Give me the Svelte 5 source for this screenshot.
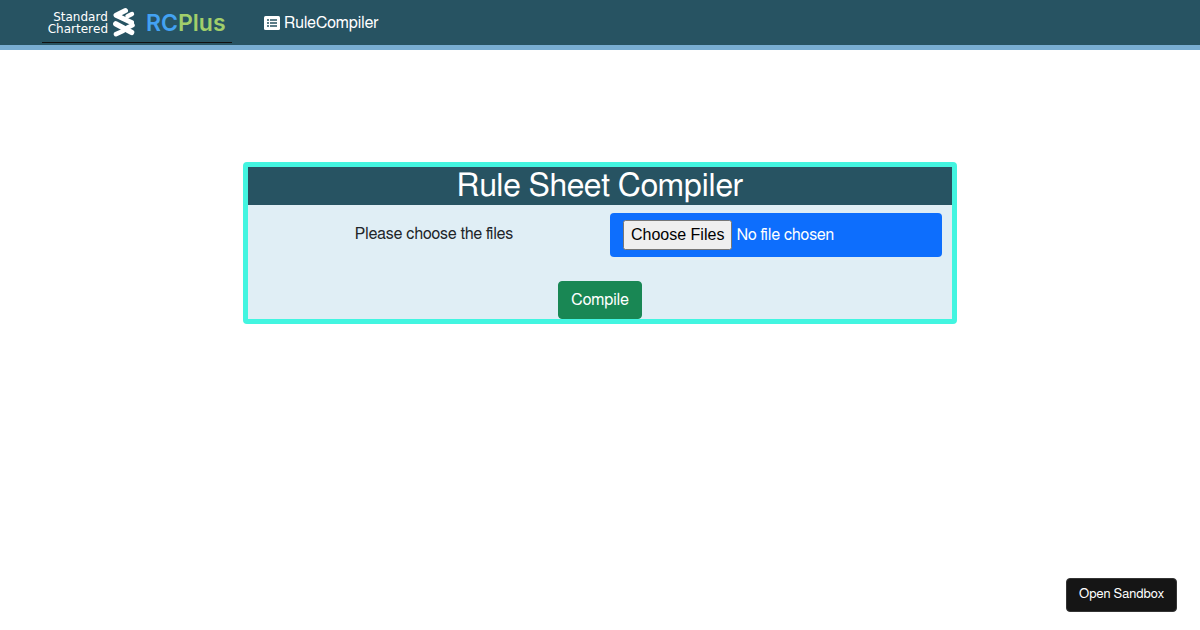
<script lang="ts">
	let files = $state<FileList | undefined>();

	function compile(event: SubmitEvent) {
		event.preventDefault();
	}
</script>

<svelte:head>
	<title>Rule Sheet Compiler</title>
</svelte:head>

<div class="page">
	<header class="navbar">
		<a class="brand" href="/" aria-label="Standard Chartered RCPlus">
			<span class="bank-name">
				<span>Standard</span>
				<span>Chartered</span>
			</span>
			<svg class="bank-mark" width="24" height="30" viewBox="0 0 24 30" fill="none" stroke="#fff" stroke-linecap="round" stroke-linejoin="round">
				<path d="M13.5 3.5L4 8.2L19.5 15.6" stroke-width="5" />
				<path d="M20 7L15.5 9.2" stroke-width="4.4" />
				<path d="M3.8 16.8L19.6 25.4" stroke-width="5.4" />
				<path d="M20.5 18.2L15.5 20.6M11 24L4 27.2" stroke-width="4.6" />
			</svg>
			<span class="product"><span class="rc">RC</span><span class="plus">Plus</span></span>
		</a>
		<nav>
			<a class="nav-link" href="/rule-compiler">
				<svg width="16" height="14" viewBox="0 0 16 14">
					<rect width="16" height="14" rx="1.5" fill="#fff" />
					<path
						d="M3 4H5M3 7H5M3 10H5M6 4H13M6 7H13M6 10H13"
						stroke="#275362"
						stroke-width="1.4"
					/>
				</svg>
				RuleCompiler
			</a>
		</nav>
	</header>

	<main>
		<form class="card" onsubmit={compile}>
			<h2>Rule Sheet Compiler</h2>
			<div class="row">
				<label for="rule-files">Please choose the files</label>
				<div class="field">
					<input id="rule-files" type="file" multiple bind:files />
				</div>
			</div>
			<button class="compile" type="submit">Compile</button>
		</form>
	</main>

	<button class="sandbox" type="button">Open Sandbox</button>
</div>

<style>
	:global(body) {
		margin: 0;
		background: #fff;
		color: #212529;
		font-family: FreeSans, "Liberation Sans", Arial, sans-serif;
		font-size: 16px;
		font-kerning: none;
		line-height: 24px;
	}

	.page *,
	.page {
		box-sizing: border-box;
	}

	.navbar {
		display: flex;
		align-items: center;
		gap: 32px;
		height: 50px;
		padding-left: 42px;
		background: #275362;
		border-bottom: 5px solid #78add2;
	}

	.brand {
		display: flex;
		align-items: center;
		width: 190px;
		height: 41px;
		padding-left: 3px;
		border-bottom: 1px solid #111;
		text-decoration: none;
	}

	.bank-name {
		display: flex;
		flex-direction: column;
		align-items: flex-end;
		width: 63px;
		padding-top: 2px;
		color: #fff;
		font-family: "DejaVu Sans", sans-serif;
		font-size: 12px;
		line-height: 12px;
	}

	.bank-mark {
		margin: 0 10px 0 4px;
	}

	.product {
		padding-top: 2px;
		font-family: Inter, sans-serif;
		font-size: 23px;
		font-weight: 600;
	}

	.rc {
		color: #43a2f2;
	}

	.plus {
		color: #a1ce6b;
	}

	.nav-link {
		display: flex;
		align-items: center;
		gap: 4px;
		color: #fff;
		text-decoration: none;
	}

	main {
		padding: 112px 16px 0;
	}

	.card {
		display: flex;
		flex-direction: column;
		max-width: 714px;
		margin: 0 auto;
		border: 5px solid #42f5e0;
		border-radius: 4px;
		background: #e0eef5;
	}

	h2 {
		margin: 0;
		background: #275362;
		color: #fff;
		font-size: 32px;
		font-weight: 400;
		line-height: 38px;
		text-align: center;
	}

	.row {
		display: grid;
		grid-template-columns: 1fr 1fr;
		padding: 8px 0 24px;
	}

	label {
		padding: 9px 0 0 20px;
		text-align: center;
	}

	.field {
		padding: 0 10px;
	}

	input {
		display: block;
		width: 100%;
		padding: 7px 13px;
		border-radius: 4px;
		background: #0d6efd;
		color: #fff;
		font: inherit;
		font-kerning: none;
	}

	input::file-selector-button {
		height: 30px;
	}

	.compile {
		align-self: center;
		padding: 6px 12px;
		border: 1px solid #198754;
		border-radius: 4px;
		background: #198754;
		color: #fff;
		font: inherit;
		font-kerning: none;
	}

	.sandbox {
		position: fixed;
		right: 23px;
		bottom: 18px;
		height: 34px;
		padding: 0 12px;
		border: 1px solid #343434;
		border-radius: 4px;
		background: #151515;
		color: #fff;
		font-family: inherit;
		font-size: 13px;
		font-kerning: none;
	}
</style>
